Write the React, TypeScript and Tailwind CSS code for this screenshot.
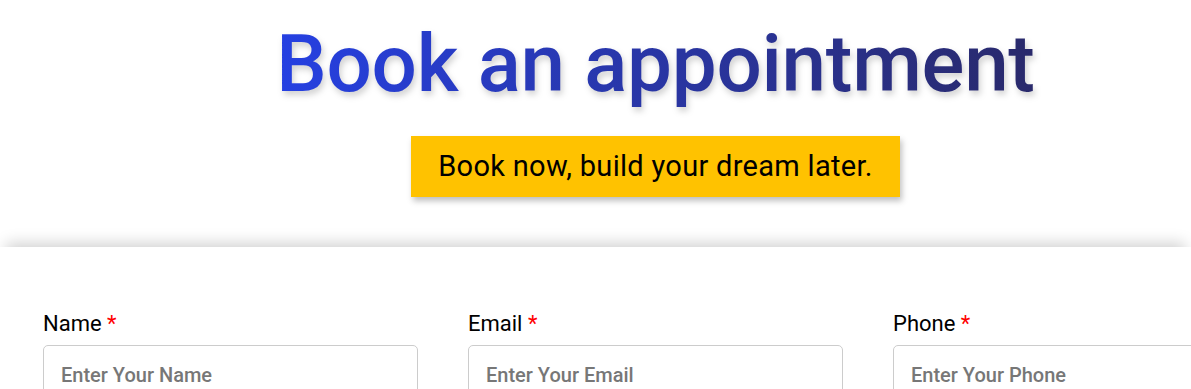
import { useState } from 'react';

type Field = {
	id: string;
	label: string;
	placeholder: string;
	type: string;
};

const fields: Field[] = [
	{ id: 'name', label: 'Name', placeholder: 'Enter Your Name', type: 'text' },
	{ id: 'email', label: 'Email', placeholder: 'Enter Your Email', type: 'email' },
	{ id: 'phone', label: 'Phone', placeholder: 'Enter Your Phone', type: 'tel' },
];

export default function App() {
	const [values, setValues] = useState<Record<string, string>>({});

	return (
		<main
			className="bg-white text-black min-h-screen overflow-hidden"
			style={{ fontFamily: 'Roboto, "Liberation Sans", sans-serif' }}
		>
			<section className="pl-[120px] pt-[16px] pb-[50px] flex flex-col items-center">
				<h1 className="text-[80px] leading-[96px] font-medium tracking-[-0.3px] bg-gradient-to-r from-[#2540e2] to-[#29296b] bg-clip-text text-transparent [filter:drop-shadow(2px_4px_3px_rgba(0,0,0,0.18))]">
					Book an appointment
				</h1>
				<div className="mt-[24px] bg-[#ffc200] w-[489px] h-[61px] flex items-center justify-center shadow-[2px_4px_6px_rgba(0,0,0,0.25)]">
					<span className="text-[29px] tracking-[0.3px] text-black">
						Book now, build your dream later.
					</span>
				</div>
			</section>

			<section className="relative z-10 bg-white shadow-[0_-10px_14px_-6px_rgba(0,0,0,0.18)] pt-[62px] pl-[43px]">
				<form className="flex gap-[50px]">
					{fields.map((f) => (
						<div key={f.id} className="w-[375px] shrink-0 flex flex-col">
							<label htmlFor={f.id} className="text-[22px] leading-[30px] mb-[6px]">
								{f.label} <span className="text-[#ff0000]">*</span>
							</label>
							<input
								id={f.id}
								type={f.type}
								placeholder={f.placeholder}
								value={values[f.id] || ''}
								onChange={(e) =>
									setValues({ ...values, [f.id]: e.target.value })
								}
								className="h-[60px] border border-[#cccccc] rounded-[5px] px-[17px] text-[20px] font-medium placeholder:text-[#777777] outline-none"
							/>
						</div>
					))}
				</form>
			</section>
		</main>
	);
}
